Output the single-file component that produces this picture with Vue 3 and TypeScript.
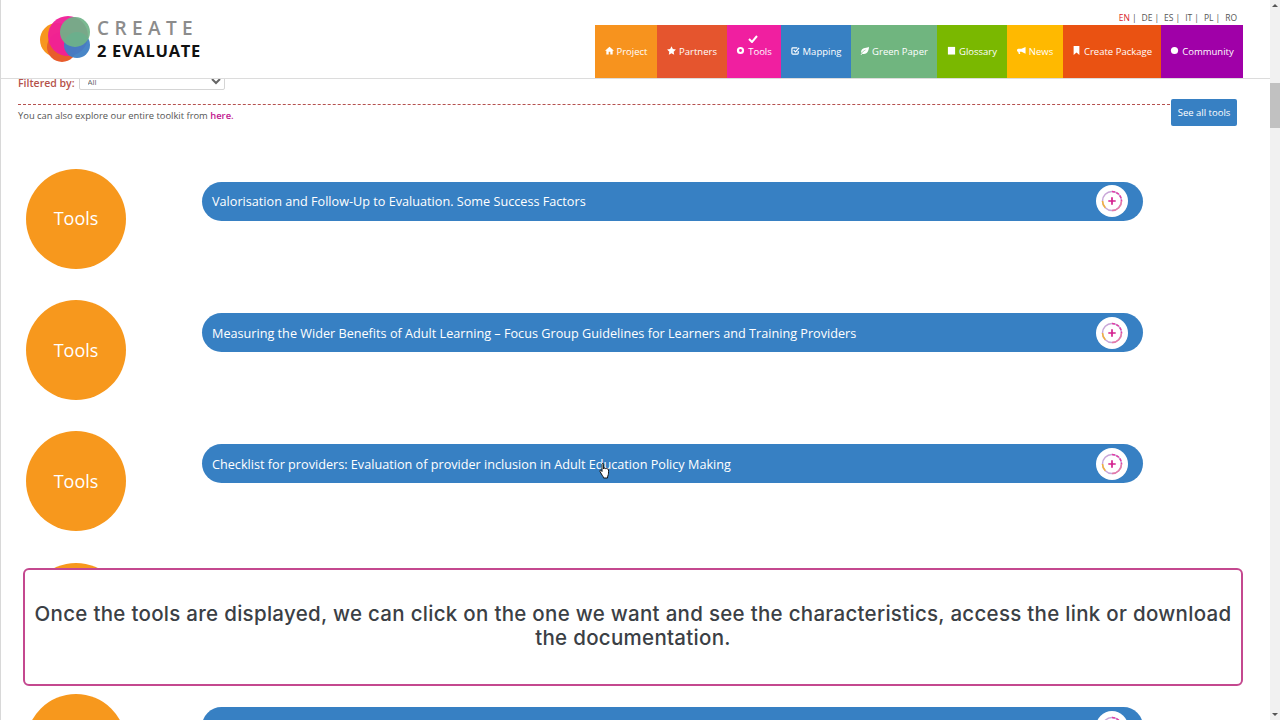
<script setup lang="ts">
interface NavItem { label: string; color: string; width: number; icon: string }
const nav: NavItem[] = [
  { label: 'Project', color: '#f7931e', width: 62, icon: 'home' },
  { label: 'Partners', color: '#e5552e', width: 70, icon: 'star' },
  { label: 'Tools', color: '#f01fa0', width: 54, icon: 'cog' },
  { label: 'Mapping', color: '#3780c3', width: 70, icon: 'check' },
  { label: 'Green Paper', color: '#70b57f', width: 86, icon: 'leaf' },
  { label: 'Glossary', color: '#7ab800', width: 70, icon: 'book' },
  { label: 'News', color: '#ffb900', width: 56, icon: 'horn' },
  { label: 'Create Package', color: '#ea5212', width: 98, icon: 'mark' },
  { label: 'Community', color: '#a000a8', width: 82, icon: 'dot' },
]
const langs = ['DE', 'ES', 'IT', 'PL', 'RO']
const rows = [
  'Valorisation and Follow-Up to Evaluation. Some Success Factors',
  'Measuring the Wider Benefits of Adult Learning – Focus Group Guidelines for Learners and Training Providers',
  'Checklist for providers: Evaluation of provider inclusion in Adult Education Policy Making',
  'Evaluation Tool',
  'Evaluation Guidelines',
]
</script>

<template>
  <div class="page">
    <div class="main">
      <header class="header">
        <div class="logo">
          <svg class="logo-mark" width="54" height="50" viewBox="0 0 54 50">
            <circle cx="17" cy="25" r="17" fill="#f7961e" />
            <circle cx="22" cy="32" r="15" fill="#e85c2c" />
            <circle cx="28" cy="21" r="20" fill="#f01f98" opacity="0.95" />
            <circle cx="37" cy="30" r="13" fill="#3f7fc4" opacity="0.95" />
            <circle cx="35" cy="17" r="15" fill="#6fb388" opacity="0.92" />
          </svg>
          <div class="logo-text">
            <span class="logo-create">CREATE</span>
            <span class="logo-eval">2 EVALUATE</span>
          </div>
        </div>
        <div class="header-right">
          <div class="langs">
            <span class="lang-on">EN</span><span class="sep">|</span>
            <template v-for="(l, i) in langs" :key="l">
              <span>{{ l }}</span><span v-if="i < langs.length - 1" class="sep">|</span>
            </template>
          </div>
          <nav class="nav">
            <a v-for="n in nav" :key="n.label" class="nav-item" :style="{ background: n.color, width: n.width + 'px' }">
              <svg v-if="n.icon === 'cog'" class="tick" width="10" height="8" viewBox="0 0 10 8"><path d="M1 4l3 3 5-6" fill="none" stroke="#fff" stroke-width="2" /></svg>
              <svg class="ico" width="9" height="9" viewBox="0 0 10 10">
                <path v-if="n.icon === 'home'" d="M5 .8L0 5.2h1.5V9.5h2.6V6.4h1.8v3.1h2.6V5.2H10z" fill="#fff" />
                <path v-else-if="n.icon === 'star'" d="M5 .3l1.5 3.1 3.4.5-2.500 2.400.6 3.400L5 8.100 2 9.700l.6-3.400L.1 3.900l3.400-.5z" fill="#fff" />
                <path v-else-if="n.icon === 'cog'" fill-rule="evenodd" d="M5 1a4 4 0 1 0 0 8 4 4 0 0 0 0-8zm0 2.400a1.600 1.600 0 1 1 0 3.200 1.600 1.600 0 0 1 0-3.200z" fill="#fff" />
                <path v-else-if="n.icon === 'check'" d="M8 5.600V8a1 1 0 0 1-1 1H2a1 1 0 0 1-1-1V3a1 1 0 0 1 1-1h5M3 4.500L5 6.500 9 2" fill="none" stroke="#fff" stroke-width="1.300" />
                <path v-else-if="n.icon === 'leaf'" d="M10 .8C8 2.200 3 1.400 1.500 5 1 6.300 1.300 7.300 1.800 7.800 3 6 5 4.600 7 4 5 5.200 2.800 7 .6 9.600L1.300 10 2.600 8.500C5 9.500 8 8 9 5.500 9.600 4 10 2.500 10 .8z" fill="#fff" />
                <path v-else-if="n.icon === 'book'" d="M1 1h8v8.500H1z" fill="#fff" />
                <path v-else-if="n.icon === 'horn'" d="M9.500 1v7.500L5 6.500H3L3.600 9H2L1.300 6.500C.5 6.300 0 5.500 0 4.700s.6-1.600 1.500-1.700H5z" fill="#fff" />
                <path v-else-if="n.icon === 'mark'" d="M1.800 0h6.400v10L5 7.200 1.800 10z" fill="#fff" />
                <circle v-else cx="5" cy="5" r="4" fill="#fff" />
              </svg>
              <span>{{ n.label }}</span>
            </a>
          </nav>
        </div>
      </header>

      <section class="filter">
        <label class="filter-label">Filtered by:</label>
        <select class="filter-select"><option>All</option></select>
      </section>

      <section class="toolbar">
        <div class="toolbar-left">
          <div class="dash"></div>
          <p class="note">You can also explore our entire toolkit from <a class="here">here.</a></p>
        </div>
        <button class="see-all">See all tools</button>
      </section>

      <section class="list">
        <article v-for="r in rows" :key="r" class="row">
          <div class="circle">Tools</div>
          <div class="bar">
            <span class="bar-title">{{ r }}</span>
            <span class="plus">
              <svg width="26" height="26" viewBox="0 0 26 26">
                <circle cx="13" cy="13" r="9.500" fill="none" stroke="#c9a6d8" stroke-width="1.500" />
                <path d="M13 3.500A9.500 9.500 0 0 1 22.500 13" fill="none" stroke="#e23fa6" stroke-width="1.500" stroke-dasharray="3 1.500" />
                <path d="M6.300 19.700A9.500 9.500 0 0 1 3.500 13" fill="none" stroke="#f2b23a" stroke-width="1.500" />
                <path d="M22.500 13A9.500 9.500 0 0 1 13 22.500" fill="none" stroke="#e57aa8" stroke-width="1.500" />
                <path d="M13 9.300v7.400M9.300 13h7.400" stroke="#d4208f" stroke-width="1.700" />
              </svg>
            </span>
          </div>
        </article>
      </section>

      <svg class="cursor" width="12" height="16" viewBox="0 0 12 16">
        <path d="M3 1.200c0-1 1.600-1 1.600 0V6l.4-.8c.7-.4 1.400-.2 1.500.5.600-.5 1.300-.3 1.500.4.700-.4 1.500 0 1.500.8 0 2.500.2 4.200-.7 6.200-.2.500-.3 1.200-.3 1.900H4.500c0-1.200-.8-1.900-1.500-3L1 8.500C.4 7.600 1.400 6.800 2.200 7.500L3 8.500z" fill="#fff" stroke="#111" stroke-width="1" stroke-linejoin="round" />
      </svg>

      <div class="caption">
        <p>Once the tools are displayed, we can click on the one we want and see the characteristics, access the link or download the documentation.</p>
      </div>
    </div>

    <aside class="scrollbar">
      <span class="arrow up"></span>
      <div class="track"><div class="thumb"></div></div>
      <span class="arrow down"></span>
    </aside>
  </div>
</template>

<style>
html, body { margin: 0; overflow: hidden; background: #fff; }
</style>

<style scoped>
.page {
  width: 1280px;
  height: 720px;
  display: flex;
  overflow: hidden;
  background: #fff;
  font-family: "Open Sans", "Liberation Sans", sans-serif;
}
.main {
  position: relative;
  width: 1270px;
  height: 720px;
  overflow: hidden;
  border-left: 1px solid #d8d8d8;
  box-sizing: border-box;
}
.header {
  position: relative;
  z-index: 2;
  height: 79px;
  box-sizing: border-box;
  background: #fff;
  border-bottom: 1px solid #dcdcdc;
  display: flex;
  justify-content: space-between;
  box-shadow: -1px 0 0 #222;
}
.logo {
  display: flex;
  align-items: flex-start;
  padding: 15px 0 0 39px;
}
.logo-text {
  display: flex;
  flex-direction: column;
  margin: 3px 0 0 3px;
}
.logo-create {
  font: 600 19px/20px "Open Sans", sans-serif;
  letter-spacing: 5.400px;
  color: #8c8c8c;
}
.logo-eval {
  font: 700 16.500px/22px "Open Sans", sans-serif;
  letter-spacing: .7px;
  color: #111;
  margin-top: 2px;
}
.header-right {
  display: flex;
  flex-direction: column;
  align-items: flex-end;
  padding-right: 27px;
}
.langs {
  height: 25px;
  box-sizing: border-box;
  padding: 12px 6px 0 0;
  font-size: 8.500px;
  line-height: 11px;
  color: #555;
}
.lang-on { color: #d8232a; }
.sep { margin: 0 5px 0 2px; }
.nav { display: flex; height: 53px; }
.nav-item {
  position: relative;
  display: flex;
  align-items: center;
  justify-content: center;
  gap: 3px;
  color: #fff;
  font-size: 9.500px;
  box-sizing: border-box;
}
.ico { margin-top: -3px; flex: none; }
.tick { position: absolute; top: 10px; left: 21px; }
.filter {
  display: flex;
  align-items: center;
  gap: 4px;
  margin-top: -7px;
  height: 18px;
  padding-left: 17px;
}
.filter-label {
  font-size: 10.500px;
  font-weight: 600;
  color: #b5524a;
  margin-top: 4px;
}
.filter-select {
  width: 146px;
  height: 18px;
  box-sizing: border-box;
  font: 8px "Open Sans", sans-serif;
  color: #666;
  background: #fff;
  border: 1px solid #d5d5d5;
  border-radius: 2px;
  padding: 0 4px;
}
.toolbar {
  display: flex;
  margin-top: 9px;
  padding-left: 17px;
  height: 70px;
  align-items: flex-start;
}
.toolbar-left { width: 1152px; }
.dash {
  margin-top: 5px;
  border-top: 1px dashed #b5514f;
}
.note {
  margin: 4px 0 0;
  font-size: 9.400px;
  line-height: 13px;
  color: #555;
}
.here { color: #c2188f; font-weight: 600; }
.see-all {
  width: 66px;
  height: 27px;
  margin-left: 1px;
  padding: 0;
  border: none;
  border-radius: 2px;
  background: #3780c3;
  color: #fff;
  font: 9.500px "Open Sans", sans-serif;
}
.list {
  display: flex;
  flex-direction: column;
  gap: 31.330px;
  padding-left: 25px;
  margin-top: -.2px;
}
.row { display: flex; gap: 76px; height: 100px; }
.circle {
  width: 100px;
  height: 100px;
  flex: none;
  border-radius: 50%;
  background: #f7981d;
  color: #fff;
  font-size: 18px;
  display: flex;
  align-items: center;
  justify-content: center;
  padding-bottom: 1px;
  box-sizing: border-box;
}
.bar {
  width: 941px;
  height: 39px;
  margin-top: 13px;
  border-radius: 20px;
  background: #3780c3;
  color: #fff;
  font-size: 12.670px;
  display: flex;
  align-items: center;
  justify-content: space-between;
  padding: 0 15px 0 10px;
  box-sizing: border-box;
}
.plus {
  width: 32px;
  height: 32px;
  border-radius: 50%;
  background: #fff;
  display: flex;
  align-items: center;
  justify-content: center;
}
.cursor {
  position: absolute;
  left: 598px;
  top: 463px;
  z-index: 3;
}
.caption {
  position: absolute;
  z-index: 2;
  left: 22px;
  top: 568px;
  width: 1220px;
  height: 118px;
  box-sizing: border-box;
  background: #fff;
  border: 2px solid #c4488f;
  border-radius: 6px;
  display: flex;
  align-items: center;
  justify-content: center;
}
.caption p {
  margin: -3px 0 0;
  text-align: center;
  font: 500 20.500px/24px Inter, "Open Sans", sans-serif;
  letter-spacing: .29px;
  color: #3b4045;
}
.scrollbar {
  width: 10px;
  height: 720px;
  background: #f1f1f1;
  display: flex;
  flex-direction: column;
  align-items: center;
}
.arrow {
  width: 0;
  height: 0;
  flex: none;
  border-left: 3px solid transparent;
  border-right: 3px solid transparent;
}
.arrow.up { border-bottom: 3px solid #555; margin: 4px 0; }
.arrow.down { border-top: 3px solid #555; margin: 4px 0; }
.track { flex: 1; width: 100%; padding-top: 72px; box-sizing: border-box; }
.thumb { height: 45px; background: #c1c1c1; }
</style>
